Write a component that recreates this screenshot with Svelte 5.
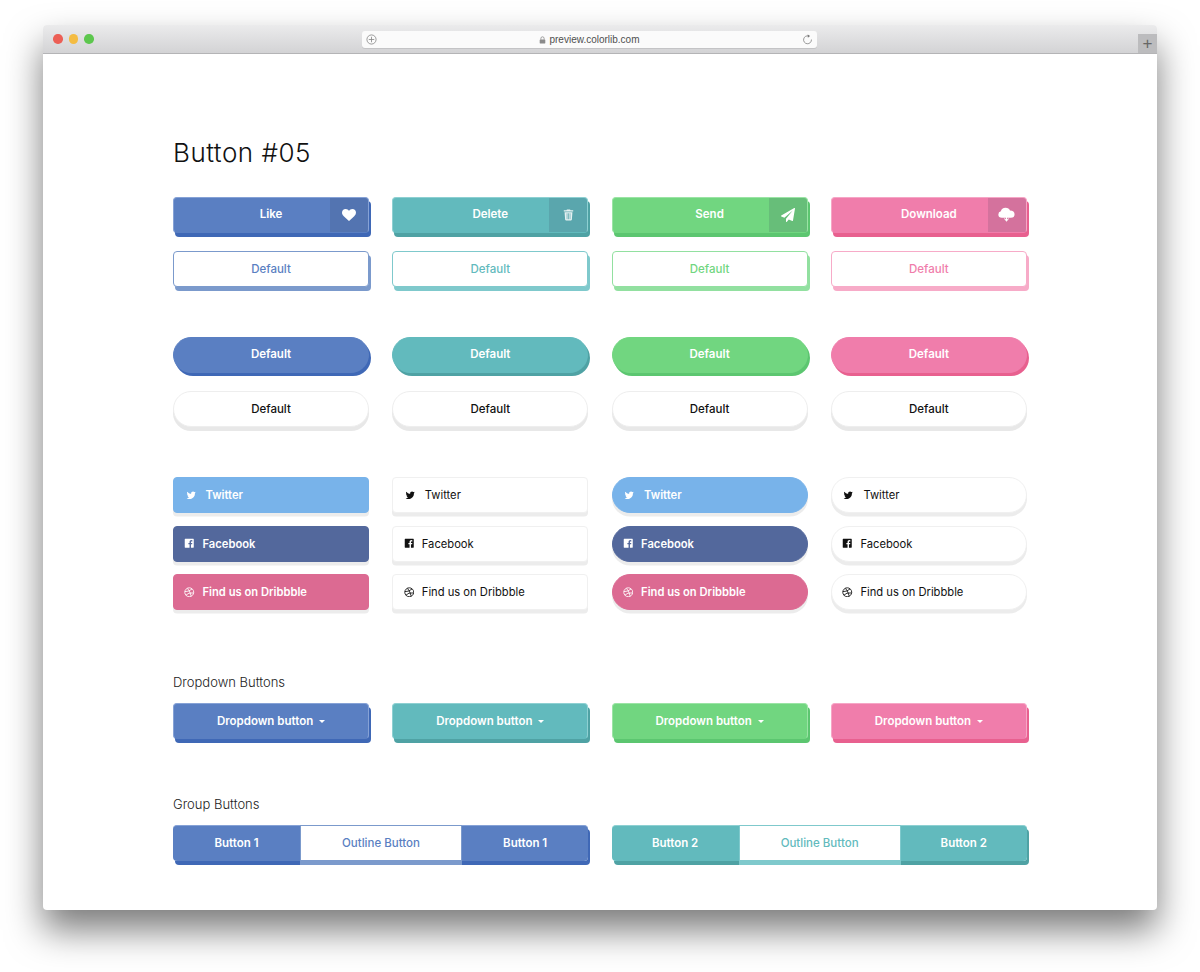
<script>
	const colors = ['blue', 'teal', 'green', 'pink'];
	const actions = [
		{ label: 'Like', icon: 'heart' },
		{ label: 'Delete', icon: 'trash' },
		{ label: 'Send', icon: 'plane' },
		{ label: 'Download', icon: 'cloud' }
	];
	const socials = [
		{ label: 'Twitter', name: 'twitter' },
		{ label: 'Facebook', name: 'facebook' },
		{ label: 'Find us on Dribbble', name: 'dribbble' }
	];
	const socialStyles = ['', 'outline', 'pill', 'pill outline'];
	const groups = [
		{ color: 'blue', label: 'Button 1' },
		{ color: 'teal', label: 'Button 2' }
	];

	// 1792 unit icon paths
	const paths = {
		heart:
			'M896 1664q-26 0-44-18l-624-602q-10-8-27.5-26t-55.5-65.5-68-97.5-53.5-121-23.5-138q0-220 127-344t351-124q62 0 126.5 21.5t120 58 95.5 68.5 76 68q36-36 76-68t95.5-68.5 120-58 126.5-21.5q224 0 351 124t127 344q0 221-229 450l-623 600q-18 18-44 18z',
		plane:
			'M1764 11q33 24 27 64l-256 1536q-5 29-32 45-14 8-31 8-11 0-24-5l-453-185-242 295q-18 23-49 23-13 0-22-4-19-7-30.5-23.5t-11.5-36.5v-349l864-1059-1069 925-395-162q-37-14-40-55-2-40 32-59l1664-960q15-9 32-9 20 0 36 11z',
		twitter:
			'M1684 408q-67 98-162 167 1 14 1 42 0 130-38 259.5t-115.5 248.5-184.5 210.5-258 146-323 54.5q-271 0-496-145 35 4 78 4 225 0 401-138-105-2-188-64.5t-114-159.5q33 5 61 5 43 0 85-11-112-23-185.5-111.5t-73.5-205.5v-4q68 38 146 41-66-44-105-115t-39-154q0-88 44-163 121 149 294.5 238.5t371.5 99.5q-8-38-8-74 0-134 94.5-228.5t228.5-94.5q140 0 236 102 109-21 205-78-37 115-142 178 92-10 184-50z',
		facebook:
			'M1579 128q35 0 60 25t25 60v1366q0 35-25 60t-60 25h-391v-595h199l30-232h-229v-148q0-56 23.5-84t91.5-28l122-1v-207q-63-9-178-9-136 0-217.5 80t-81.5 226v171h-200v232h200v595h-735q-35 0-60-25t-25-60v-1366q0-35 25-60t60-25h1366z'
	};
</script>

{#snippet icon(name)}
	{#if name === 'trash'}
		<svg class="icon trash" viewBox="0 0 14 16">
			<path d="M5 1.5h4l.6 1.2H13v1.5H1V2.700h3.400z" fill="currentColor" />
			<path
				d="M2 5h10l-.7 9.500q-.1 1-1 1H3.700q-.9 0-1-1zM4.700 6.500v7.500h.9V6.500zM6.600 6.500v7.500h.9V6.500zM8.500 6.500v7.500h.9V6.500z"
				fill="currentColor"
				fill-rule="evenodd"
			/>
		</svg>
	{:else if name === 'cloud'}
		<svg class="icon cloud" viewBox="0 0 18 16">
			<path
				d="M4.200 11.500Q.3 11.300.3 7.900 .3 5.300 3 4.600 3.700 .7 8 .7q3.600 0 4.700 3 4.900 .2 4.900 4 0 3.700-4 3.800z"
				fill="currentColor"
			/>
			<path d="M9 8v6.300M6.800 12.300 9 14.800l2.200-2.500" fill="none" stroke="currentColor" stroke-width="1.100" />
		</svg>
	{:else if name === 'dribbble'}
		<svg class="icon dribbble" viewBox="0 0 16 16" fill="none" stroke="currentColor" stroke-width="1.300">
			<circle cx="8" cy="8" r="6.800" />
			<path d="M5.300 1.900Q9.500 7 11 14M1.300 7q6 .5 11-4M2.800 12.500Q6.500 8 14.700 9" />
		</svg>
	{:else}
		<svg class="icon {name}" viewBox="0 0 1792 1792"><path d={paths[name]} fill="currentColor" /></svg>
	{/if}
{/snippet}

<div class="page">
	<div class="window">
		<header class="titlebar">
			<div class="lights">
				<span class="light red"></span>
				<span class="light yellow"></span>
				<span class="light lime"></span>
			</div>
			<div class="address">
				<svg class="addr-icon" viewBox="0 0 12 12" fill="none" stroke="#888" stroke-width="0.900">
					<circle cx="6" cy="6" r="5" />
					<path d="M6 3v6M3 6h6" />
				</svg>
				<span class="url">
					<svg class="lock" viewBox="0 0 8 10">
						<path d="M2 4.500V3a2 2 0 0 1 4 0v1.500" fill="none" stroke="#8a8a8a" />
						<rect x="0.500" y="4.300" width="7" height="5.200" rx="0.600" fill="#8a8a8a" />
					</svg>
					preview.colorlib.com
				</span>
				<svg class="addr-icon" viewBox="0 0 12 12" fill="none" stroke="#777" stroke-width="0.800">
					<path d="M7.500 2.300A4.300 4.300 0 1 0 10.300 6" />
					<path d="M6.200 .5 8.800 2.300 6.400 4z" fill="#777" stroke="none" />
				</svg>
			</div>
			<div class="new-tab">+</div>
		</header>

		<main class="content">
			<h1>Button #05</h1>

			<section class="grid">
				{#each actions as action, i}
					<button class="btn solid {colors[i]}">
						<span>{action.label}</span>
						<span class="icon-box">{@render icon(action.icon)}</span>
					</button>
				{/each}
				{#each colors as color}
					<button class="btn line {color}">Default</button>
				{/each}
			</section>

			<section class="grid pills">
				{#each colors as color}
					<button class="btn solid round {color}">Default</button>
				{/each}
				{#each colors as color}
					<button class="btn plain round">Default</button>
				{/each}
			</section>

			<section class="grid social-grid">
				{#each socials as social}
					{#each socialStyles as style}
						<button class="social {social.name} {style}">
							{@render icon(social.name)}
							<span>{social.label}</span>
						</button>
					{/each}
				{/each}
			</section>

			<h2 class="drop-title">Dropdown Buttons</h2>
			<section class="grid">
				{#each colors as color}
					<button class="btn solid {color}">Dropdown button <i class="caret"></i></button>
				{/each}
			</section>

			<h2 class="group-title">Group Buttons</h2>
			<section class="groups">
				{#each groups as group}
					<div class="group {group.color}">
						<button class="piece">{group.label}</button>
						<button class="piece hollow">Outline Button</button>
						<button class="piece">{group.label}</button>
					</div>
				{/each}
			</section>
		</main>
	</div>
</div>

<style>
	:global(body) {
		background: #fff;
		font-family: Inter, 'Liberation Sans', sans-serif;
	}

	.page {
		height: 972px;
		padding: 25px 43px 0;
		box-sizing: border-box;
		overflow: hidden;
	}

	.window {
		height: 885px;
		border-radius: 4px;
		background: #fff;
		overflow: hidden;
		box-shadow: 0 20px 36px rgba(0, 0, 0, 0.52);
		position: relative;
	}

	/* Browser chrome */
	.titlebar {
		height: 28px;
		display: flex;
		align-items: flex-start;
		background: linear-gradient(#ebebec, #d3d3d5);
		border-bottom: 1px solid #b4b4b6;
	}

	.lights {
		display: flex;
		gap: 6px;
		padding: 9px 0 0 10px;
		width: 319px;
		box-sizing: border-box;
	}

	.light {
		width: 9.500px;
		height: 9.500px;
		border-radius: 50%;
	}

	.red {
		background: #ec5f56;
	}
	.yellow {
		background: #f4bc42;
	}
	.lime {
		background: #5dc74e;
	}

	.address {
		width: 455px;
		height: 17px;
		margin-top: 6px;
		padding: 0 4px;
		box-sizing: border-box;
		display: flex;
		align-items: center;
		justify-content: space-between;
		background: #fbfbfb;
		border-radius: 3px;
		box-shadow: 0 1px 0 #c4c4c6;
	}

	.addr-icon {
		width: 11px;
		height: 11px;
	}

	.url {
		font-family: 'Liberation Sans', sans-serif;
		font-size: 10px;
		color: #4f4f4f;
		display: flex;
		align-items: center;
		gap: 3px;
	}

	.lock {
		width: 7px;
		height: 8px;
	}

	.new-tab {
		position: absolute;
		right: 0;
		top: 9px;
		width: 19px;
		height: 19px;
		background: #bcbcbe;
		color: #666;
		font: 300 17px/19px 'Liberation Sans', sans-serif;
		text-align: center;
	}

	/* Page */
	.content {
		padding: 83px 0 0 130px;
	}

	h1 {
		margin: 0 0 27.500px;
		font-size: 26px;
		line-height: 32px;
		font-weight: 300;
		letter-spacing: 0.5px;
		color: #111;
	}

	h2 {
		margin: 0 0 11px;
		font-size: 13px;
		line-height: 20px;
		font-weight: 300;
		color: #222;
	}

	.drop-title {
		margin-top: 62px;
	}

	.group-title {
		margin-top: 55px;
	}

	.grid {
		display: grid;
		grid-template-columns: repeat(4, 196px);
		column-gap: 23.300px;
		row-gap: 18.500px;
	}

	.pills {
		margin-top: 49.500px;
	}

	.social-grid {
		margin-top: 50px;
		row-gap: 12.500px;
	}

	button {
		font-family: inherit;
		font-size: 11.500px;
		box-sizing: border-box;
		height: 36px;
		padding: 0;
		margin: 0;
		cursor: pointer;
	}

	.blue {
		--main: #5a7fc2;
		--edge: #86a2d6;
		--drop: #3f68b6;
		--soft: #7b9acc;
	}
	.teal {
		--main: #62babd;
		--edge: #8ed0d2;
		--drop: #4fa2a4;
		--soft: #7fc9cc;
	}
	.green {
		--main: #71d680;
		--edge: #9be4a5;
		--drop: #5cc670;
		--soft: #92e0a0;
	}
	.pink {
		--main: #f07dab;
		--edge: #f6a6c6;
		--drop: #e8608f;
		--soft: #f7abc8;
	}

	.btn {
		position: relative;
		border-radius: 4px;
		font-weight: 600;
	}

	.solid {
		color: #fff;
		background: var(--main);
		padding-bottom: 1px;
		border: 1px solid var(--edge);
		border-bottom-color: var(--main);
		box-shadow: 2px 4px 0 var(--drop);
	}

	.line {
		color: var(--main);
		font-weight: 500;
		background: #fff;
		border: 1px solid var(--soft);
		box-shadow: 2px 4px 0 var(--soft);
	}

	.round {
		border-radius: 18px;
	}

	.solid.round {
		border-color: var(--main);
		box-shadow: 2px 3px 0 var(--drop);
	}

	.plain {
		color: #111;
		font-weight: 500;
		background: #fff;
		border: 1px solid #eee;
		box-shadow: 0 4px 0 #e8e8e8;
	}

	.icon-box {
		position: absolute;
		right: 0;
		top: 0;
		bottom: 0;
		width: 38px;
		display: flex;
		align-items: center;
		justify-content: center;
		background: rgba(40, 50, 80, 0.14);
		border-radius: 0 3px 0 0;
	}

	.icon {
		display: block;
		flex: none;
	}

	.icon-box .icon {
		width: 14px;
		height: 14px;
	}

	.icon-box .cloud {
		width: 17px;
		height: 15px;
	}

	.icon-box .trash {
		width: 11px;
		height: 13px;
		opacity: 0.85;
	}

	.caret {
		display: inline-block;
		margin-left: 3px;
		vertical-align: 2px;
		border-top: 3.500px solid #fff;
		border-left: 3.500px solid transparent;
		border-right: 3.500px solid transparent;
	}

	/* Social buttons */
	.social {
		display: flex;
		align-items: center;
		gap: 7.700px;
		padding-left: 10.300px;
		border-radius: 4px;
		color: #fff;
		font-size: 11.200px;
		font-weight: 600;
		border: 1px solid var(--brand);
		background: var(--brand);
		box-shadow: 0 3.500px 0 #ececec;
	}

	.social.twitter {
		--brand: #78b3ea;
		gap: 9.500px;
		padding-left: 11.500px;
	}
	.social.facebook {
		--brand: #53689c;
	}
	.social.dribbble {
		--brand: #dc6a92;
	}

	.social.pill {
		border-radius: 18px;
	}

	.social.outline {
		color: #111;
		font-weight: 400;
		background: #fff;
		border-color: #f0f0f0;
	}

	.social .icon {
		width: 10.500px;
		height: 10.500px;
	}

	/* Group buttons */
	.groups {
		display: flex;
		gap: 23.300px;
	}

	.group {
		width: 415.300px;
		display: grid;
		grid-template-columns: 127px 162px 1fr;
		border-radius: 4px;
		box-shadow: 2px 4px 0 var(--drop);
	}

	.piece {
		color: #fff;
		font-weight: 600;
		background: var(--main);
		padding-bottom: 1px;
		border: 1px solid var(--edge);
		border-width: 1px 0 0;
	}

	.piece:first-child {
		border-radius: 4px 0 0 4px;
	}

	.piece:last-child {
		border-radius: 0 4px 4px 0;
	}

	.hollow {
		color: var(--main);
		font-weight: 500;
		background: #fff;
		padding-bottom: 0;
		border: 1px solid var(--soft);
		box-shadow: 0 4px 0 var(--soft);
	}
</style>
